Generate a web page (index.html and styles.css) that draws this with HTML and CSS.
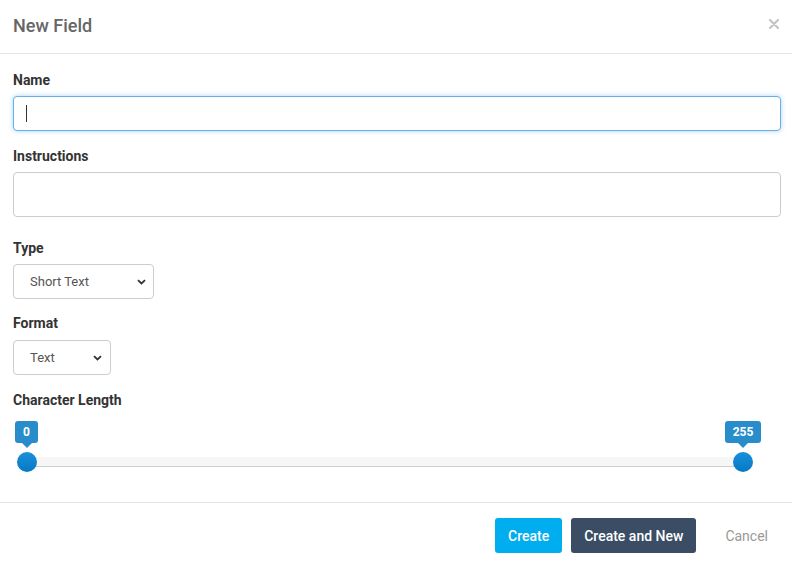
FILE: index.html
```html
<!DOCTYPE html>
<html lang="en">
<head>
<meta charset="utf-8">
<title>New Field</title>
<link rel="stylesheet" href="styles.css">
</head>
<body>
<div class="modal">
  <header class="modal-header">
    <h1 class="modal-title">New Field</h1>
    <button class="close" type="button" aria-label="Close">
      <svg width="10" height="10" viewBox="0 0 10 10"><path d="M1 1L9 9M9 1L1 9" stroke="#c4c4c4" stroke-width="2.2" stroke-linecap="round"/></svg>
    </button>
  </header>
  <div class="modal-body">
    <div class="field">
      <label class="label">Name</label>
      <div class="input input-focus"><span class="caret"></span></div>
    </div>
    <div class="field field-area">
      <label class="label">Instructions</label>
      <div class="input textarea"></div>
    </div>
    <div class="field field-select">
      <label class="label">Type</label>
      <div class="select select-type"><span>Short Text</span>
        <svg width="9" height="6" viewBox="0 0 9 6"><path d="M1 1.2L4.5 4.5L8 1.2" fill="none" stroke="#333" stroke-width="1.8"/></svg>
      </div>
    </div>
    <div class="field field-select2">
      <label class="label label-loose">Format</label>
      <div class="select select-format"><span>Text</span>
        <svg width="9" height="6" viewBox="0 0 9 6"><path d="M1 1.2L4.5 4.5L8 1.2" fill="none" stroke="#333" stroke-width="1.8"/></svg>
      </div>
    </div>
    <div class="field field-last">
      <label class="label">Character Length</label>
      <div class="slider">
        <div class="track"></div>
        <div class="tip tip-min">0</div>
        <div class="tip tip-max">255</div>
        <div class="handle handle-min"></div>
        <div class="handle handle-max"></div>
      </div>
    </div>
  </div>
  <footer class="modal-footer">
    <button class="btn btn-primary" type="button">Create</button>
    <button class="btn btn-dark" type="button">Create and New</button>
    <button class="btn btn-link" type="button">Cancel</button>
  </footer>
</div>
</body>
</html>
```
FILE: styles.css
```css
* { box-sizing: border-box; }
html, body { margin: 0; padding: 0; background: #fff; }
body { font-family: Roboto, "Liberation Sans", Arial, sans-serif; color: #333; }

.modal { width: 792px; height: 563px; background: #fff; }

.modal-header {
  height: 54px;
  border-bottom: 1px solid #e5e5e5;
  display: flex;
  align-items: center;
  justify-content: space-between;
  padding: 0 13px 2px 13px;
}
.modal-title {
  margin: 0;
  font-size: 18px;
  font-weight: 500;
  color: #666;
  line-height: 24px;
}
.close {
  border: 0;
  background: none;
  padding: 0;
  width: 10px;
  height: 10px;
  display: flex;
  margin-top: -4px;
}

.modal-body { padding: 16px 11px 19px 13px; }

.field { margin-bottom: 15px; }
.field-area { margin-bottom: 21px; }
.field-select { margin-bottom: 14px; }
.field-select2 { margin-bottom: 15px; }
.field-last { margin-bottom: 0; }

.label {
  display: block;
  font-size: 14px;
  font-weight: 700;
  line-height: 20px;
  color: #333;
  margin-bottom: 6px;
}
.label-loose { margin-bottom: 7px; }

.input {
  height: 35px;
  border: 1px solid #ccc;
  border-radius: 4px;
  background: #fff;
  display: flex;
  align-items: center;
  padding-left: 12px;
}
.input-focus {
  border-color: #66afe9;
  box-shadow: 0 0 5px rgba(102, 175, 233, 0.55);
}
.caret {
  display: block;
  width: 1px;
  height: 17px;
  background: #333;
}
.textarea { height: 45px; }

.select {
  height: 35px;
  border: 1px solid #ccc;
  border-radius: 4px;
  display: flex;
  align-items: center;
  justify-content: space-between;
  padding: 0 7px 0 16px;
  font-size: 13px;
  color: #555;
}
.select-type { width: 141px; }
.select-format { width: 98px; padding-right: 8px; }

.slider {
  position: relative;
  height: 62px;
  margin-top: 11px;
}
.track {
  position: absolute;
  left: 14px;
  width: 716px;
  top: 36px;
  height: 10px;
  background: #f6f6f6;
  border-bottom: 1px solid #cfcfcf;
}
.tip {
  position: absolute;
  top: 0;
  height: 22px;
  background: #2a8dcb;
  color: #fff;
  font-size: 12px;
  font-weight: 700;
  line-height: 22px;
  text-align: center;
  border-radius: 3px;
}
.tip::after {
  content: "";
  position: absolute;
  left: 50%;
  bottom: -5px;
  margin-left: -5px;
  border-left: 5px solid transparent;
  border-right: 5px solid transparent;
  border-top: 5px solid #2a8dcb;
}
.tip-min { left: 2px; width: 23px; }
.tip-max { left: 712px; width: 36px; }
.handle {
  position: absolute;
  top: 31px;
  width: 20px;
  height: 20px;
  border-radius: 50%;
  background: linear-gradient(#1990dc, #0679c3);
}
.handle-min { left: 4px; }
.handle-max { left: 720px; }

.modal-footer {
  border-top: 1px solid #e5e5e5;
  display: flex;
  justify-content: flex-end;
  align-items: flex-start;
  gap: 9px;
  padding: 15px 4px 0 0;
}
.btn {
  height: 35px;
  border: 0;
  border-radius: 3px;
  font-family: Roboto, "Liberation Sans", Arial, sans-serif;
  font-size: 14px;
  font-weight: 500;
  padding: 0 13px;
  white-space: nowrap;
  cursor: pointer;
}
.btn-primary { background: #00adee; color: #fff; }
.btn-dark { background: #3a4d64; color: #fff; }
.btn-link { background: none; color: #999; padding: 0 20px; font-weight: 400; }
```
